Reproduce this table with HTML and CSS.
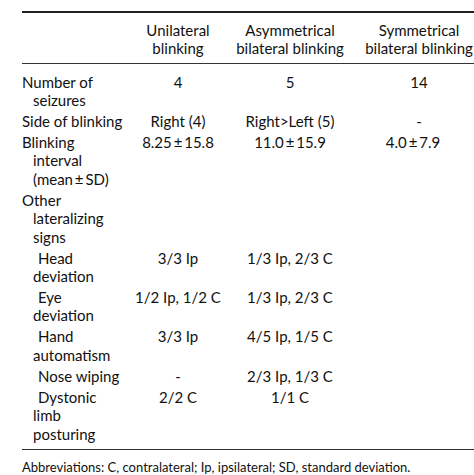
FILE: index.html
```html
<!DOCTYPE html>
<html>
<head>
<meta charset="utf-8">
<link rel="stylesheet" href="styles.css">
</head>
<body>
<div class="page">
  <table class="data">
    <colgroup>
      <col class="c-label"><col class="c1"><col class="c2"><col class="c3">
    </colgroup>
    <thead>
      <tr>
        <th></th>
        <th>Unilateral<br>blinking</th>
        <th>Asymmetrical<br>bilateral blinking</th>
        <th>Symmetrical<br>bilateral blinking</th>
      </tr>
    </thead>
    <tbody>
      <tr class="first">
        <td class="lab">Number of<br>seizures</td><td>4</td><td>5</td><td>14</td>
      </tr>
      <tr>
        <td class="lab">Side of blinking</td><td>Right (4)</td><td>Right&gt;Left (5)</td><td>-</td>
      </tr>
      <tr>
        <td class="lab">Blinking<br>interval<br>(mean&#8201;±&#8201;SD)</td><td>8.25&#8201;±&#8201;15.8</td><td>11.0&#8201;±&#8201;15.9</td><td class="shift">4.0&#8201;±&#8201;7.9</td>
      </tr>
      <tr>
        <td class="lab">Other<br>lateralizing<br>signs</td><td></td><td></td><td></td>
      </tr>
      <tr>
        <td class="lab sub">Head<br>deviation</td><td>3/3 Ip</td><td>1/3 Ip, 2/3 C</td><td></td>
      </tr>
      <tr>
        <td class="lab sub">Eye<br>deviation</td><td>1/2 Ip, 1/2 C</td><td>1/3 Ip, 2/3 C</td><td></td>
      </tr>
      <tr>
        <td class="lab sub">Hand<br>automatism</td><td>3/3 Ip</td><td>4/5 Ip, 1/5 C</td><td></td>
      </tr>
      <tr>
        <td class="lab sub">Nose wiping</td><td>-</td><td>2/3 Ip, 1/3 C</td><td></td>
      </tr>
      <tr class="last">
        <td class="lab sub">Dystonic<br>limb<br>posturing</td><td>2/2 C</td><td>1/1 C</td><td></td>
      </tr>
    </tbody>
  </table>
  <p class="note">Abbreviations: C, contralateral; Ip, ipsilateral; SD, standard deviation.</p>
</div>
</body>
</html>
```
FILE: styles.css
```css
html, body {
  margin: 0;
  padding: 0;
  background: #fff;
  overflow: hidden;
}
body {
  width: 474px;
  height: 475px;
  font-family: "Lato", "Open Sans", sans-serif;
  font-size: 15px;
  color: #111;
}
.page {
  padding: 11px 0 0 22px;
  width: 470px;
}
.data {
  border-collapse: collapse;
  table-layout: fixed;
  width: 460px;
}
.c-label { width: 110px; }
.c1 { width: 92px; }
.c2 { width: 132px; }
.c3 { width: 126px; }
.data th {
  font-weight: normal;
  text-align: center;
  white-space: nowrap;
  line-height: 18px;
  padding: 8px 0 6px;
  border-top: 2px solid #222;
  border-bottom: 1px solid #333;
}
.data td {
  text-align: center;
  vertical-align: top;
  white-space: nowrap;
  line-height: 18.5px;
  padding: 1.2px 0;
}
.data tr.first td { padding-top: 8.5px; }
.data tr.last td {
  padding-bottom: 5.5px;
  border-bottom: 1px solid #333;
}
.data td.lab {
  text-align: left;
  padding-left: 11px;
  text-indent: -11px;
}
.data td.lab.sub {
  text-indent: 5px;
}
.data td.shift { padding-right: 12px; }
.note {
  margin: 10px 0 0;
  line-height: 14px;
  font-size: 13px;
  white-space: nowrap;
}
```
